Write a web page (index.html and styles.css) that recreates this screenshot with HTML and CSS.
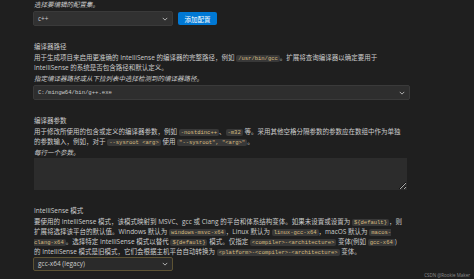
FILE: index.html
```html
<!DOCTYPE html>
<html lang="zh-CN">
<head>
    <meta charset="UTF-8">
    <title>C/C++ 配置</title>
    <link rel="stylesheet" href="styles.css">
</head>
<body>
    <div class="page">
        <div class="group first">
            <p class="tip">选择要编辑的配置集。</p>
            <div class="row">
                <div class="select short">
                    <span>c++</span>
                    <svg class="chev" viewBox="0 0 8 5"><path d="M1 1l3 3 3-3"/></svg>
                </div>
                <button class="btn">添加配置</button>
            </div>
        </div>

        <div class="group">
            <h3>编译器路径</h3>
            <p class="desc">用于生成项目来启用更准确的 IntelliSense 的编译器的完整路径，例如 <code>/usr/bin/gcc</code>。扩展将查询编译器以确定要用于 IntelliSense 的系统是否包含路径和默认定义。</p>
            <p class="tip">指定编译器路径或从下拉列表中选择检测到的编译器路径。</p>
            <div class="select long mono">
                <span>C:/mingw64/bin/g++.exe</span>
                <svg class="chev" viewBox="0 0 8 5"><path d="M1 1l3 3 3-3"/></svg>
            </div>
        </div>

        <div class="group">
            <h3>编译器参数</h3>
            <p class="desc">用于修改所使用的包含或定义的编译器参数，例如 <code>-nostdinc++</code>、<code>-m32</code> 等。采用其他空格分隔参数的参数应在数组中作为单独的参数输入，例如，对于 <code>--sysroot &lt;arg&gt;</code> 使用 <code>"--sysroot", "&lt;arg&gt;"</code>。</p>
            <p class="tip">每行一个参数。</p>
            <textarea class="area"></textarea>
        </div>

        <div class="group">
            <h3>IntelliSense 模式</h3>
            <p class="desc">要使用的 IntelliSense 模式，该模式映射到 MSVC、gcc 或 Clang 的平台和体系结构变体。如果未设置或设置为 <code>${default}</code>，则扩展将选择该平台的默认值。Windows 默认为 <code>windows-msvc-x64</code>，Linux 默认为 <code>linux-gcc-x64</code>，macOS 默认为 <code>macos-clang-x64</code>。选择特定 IntelliSense 模式以替代 <code>${default}</code> 模式。仅指定 <code>&lt;compiler&gt;-&lt;architecture&gt;</code> 变体(例如 <code>gcc-x64</code>)的 IntelliSense 模式是旧模式，它们会根据主机平台自动转换为 <code>&lt;platform&gt;-&lt;compiler&gt;-&lt;architecture&gt;</code> 变体。</p>
            <div class="select short gold">
                <span>gcc-x64 (legacy)</span>
                <svg class="chev" viewBox="0 0 8 5"><path d="M1 1l3 3 3-3"/></svg>
            </div>
        </div>
    </div>
    <div class="mark">CSDN @Rookie Maker</div>
</body>
</html>
```

FILE: styles.css
```css
* {
    padding: 0;
    margin: 0;
    box-sizing: border-box;
}
html, body {
    height: 100%;
}
body {
    position: relative;
    background: #1f1f1f;
    color: #cccccc;
    font-family: "Open Sans", "Noto Sans CJK SC", sans-serif;
    font-size: 6.5px;
    line-height: 10px;
    overflow: hidden;
    color-scheme: dark;
}
.page {
    width: 368px;
    margin-left: 34px;
}
.group {
    margin-top: 16px;
}
.group.first {
    margin-top: 0;
}
h3 {
    font-size: 6.5px;
    font-weight: normal;
    line-height: 10px;
}
.desc {
    margin-top: 1px;
}
.tip {
    font-style: italic;
    margin-top: 1px;
}
.group.first .tip {
    margin-top: 0;
}
code {
    font-family: "Liberation Mono", monospace;
    font-size: 5.5px;
    line-height: 6px;
    color: #d7ba7d;
    background: #383838;
    border-radius: 2px;
    padding: 0 2px;
}
.row {
    display: flex;
    align-items: center;
    gap: 5px;
    margin-top: 1px;
}
.select {
    display: flex;
    align-items: center;
    justify-content: space-between;
    height: 15px;
    padding: 0 4px 0 4px;
    background: #313131;
    border: 1px solid #3a3a3a;
    border-radius: 2px;
    margin-left: -1px;
}
.select.short {
    width: 140px;
}
.select.long {
    width: 377px;
    height: 15px;
    margin-top: 1px;
    background: #2e2e2e;
}
.mono span {
    font-family: "Liberation Mono", monospace;
    font-size: 5.6px;
}
.select.gold {
    height: 14px;
    margin-top: 0;
    background: #2a2a2a;
    border-color: #5d5333;
}
.chev {
    width: 6px;
    height: 4px;
    fill: none;
    stroke: #c0c0c0;
    stroke-width: 1.2;
}
.btn {
    height: 13px;
    padding: 0 6.5px;
    background: #0078d4;
    color: #ffffff;
    border: none;
    border-radius: 2px;
    font-family: "Open Sans", "Noto Sans CJK SC", sans-serif;
    font-size: 6.5px;
}
.area {
    display: block;
    width: 373px;
    height: 32px;
    background: #2c2c2c;
    border: none;
    resize: vertical;
}
.mark {
    position: absolute;
    right: 4px;
    bottom: 1px;
    font-size: 4.5px;
    line-height: 6px;
    color: #8a8a8a;
}
```
